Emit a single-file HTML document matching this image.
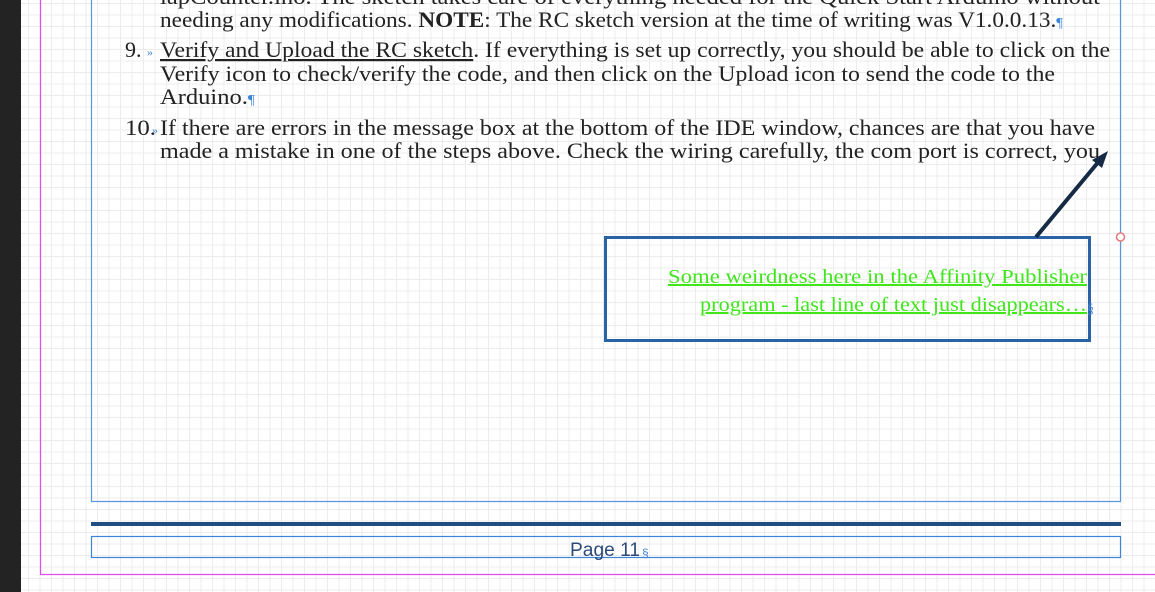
<!DOCTYPE html>
<html><head><style>
html,body{margin:0;padding:0;}
body{width:1155px;height:592px;overflow:hidden;position:relative;background:#fff;
background-image:linear-gradient(#ececec 1px,transparent 1px),linear-gradient(90deg,#ececec 1px,transparent 1px);
background-size:11.5px 11.5px;background-position:5px 3px;}
</style></head><body>
<div style="position:absolute;left:0;top:0;width:21px;height:592px;background:#232323"></div>
<svg width="1155" height="592" style="position:absolute;left:0;top:0" xmlns="http://www.w3.org/2000/svg">
<line x1="40.5" y1="0" x2="40.5" y2="574" stroke="#e04cf0" stroke-width="1.2"/>
<line x1="40" y1="574.5" x2="1155" y2="574.5" stroke="#e04cf0" stroke-width="1.2"/>
<path d="M91.5 0 V501.5 H1120.5 V0" fill="none" stroke="#5b95de" stroke-width="1.2"/>
<rect x="91" y="522" width="1030" height="4" fill="#1f4f82"/>
<rect x="91.5" y="536.5" width="1029" height="21" fill="none" stroke="#3d85db" stroke-width="1.2"/>
<g font-family="Liberation Serif, serif" font-size="22" fill="#222">
<text x="160" y="4" textLength="940" lengthAdjust="spacingAndGlyphs">lapCounter.ino. The sketch takes care of everything needed for the Quick Start Arduino without</text>
<text x="160" y="27" textLength="903" lengthAdjust="spacingAndGlyphs">needing any modifications. <tspan font-weight="bold">NOTE</tspan>: The RC sketch version at the time of writing was V1.0.0.13.<tspan fill="#3d85db" font-size="14">¶</tspan></text>
<text x="125" y="57">9.</text>
<text x="147" y="56" font-size="12" fill="#3d85db">»</text>
<text x="160" y="57" textLength="950" lengthAdjust="spacingAndGlyphs"><tspan text-decoration="underline">Verify and Upload the RC sketch</tspan>. If everything is set up correctly, you should be able to click on the</text>
<text x="160" y="81" textLength="895" lengthAdjust="spacingAndGlyphs">Verify icon to check/verify the code, and then click on the Upload icon to send the code to the</text>
<text x="160" y="104" textLength="95" lengthAdjust="spacingAndGlyphs">Arduino.<tspan fill="#3d85db" font-size="14">¶</tspan></text>
<text x="125" y="135" textLength="31" lengthAdjust="spacingAndGlyphs">10.</text>
<text x="152" y="134" font-size="12" fill="#3d85db">»</text>
<text x="160" y="135" textLength="935" lengthAdjust="spacingAndGlyphs">If there are errors in the message box at the bottom of the IDE window, chances are that you have</text>
<text x="160" y="158" textLength="940" lengthAdjust="spacingAndGlyphs">made a mistake in one of the steps above. Check the wiring carefully, the com port is correct, you</text>
</g>
<rect x="605.5" y="237.5" width="484" height="103" fill="none" stroke="#2a62a8" stroke-width="3"/>
<line x1="1036" y1="237" x2="1100" y2="160" stroke="#152a44" stroke-width="4"/>
<path d="M1108 151 L1092 160 L1102 168 Z" fill="#152a44"/>
<circle cx="1120.5" cy="237" r="4" fill="#fff" stroke="#e07a7a" stroke-width="1.5"/>
<g font-family="Liberation Serif, serif" font-size="20" fill="#3ee61a" text-decoration="underline">
<text x="668" y="283" textLength="419" lengthAdjust="spacingAndGlyphs">Some weirdness here in the Affinity Publisher</text>
<text x="700" y="311" textLength="387" lengthAdjust="spacingAndGlyphs">program - last line of text just disappears…</text>
</g>
<text x="1087" y="313" font-family="Liberation Serif, serif" font-size="14" fill="#3d85db">§</text>
<text x="570" y="556" font-family="Liberation Sans, sans-serif" font-size="19" fill="#2b4a7a" textLength="70" lengthAdjust="spacingAndGlyphs">Page 11</text>
<text x="642" y="557" font-family="Liberation Sans, sans-serif" font-size="12" fill="#3d85db">§</text>
</svg>
</body></html>
